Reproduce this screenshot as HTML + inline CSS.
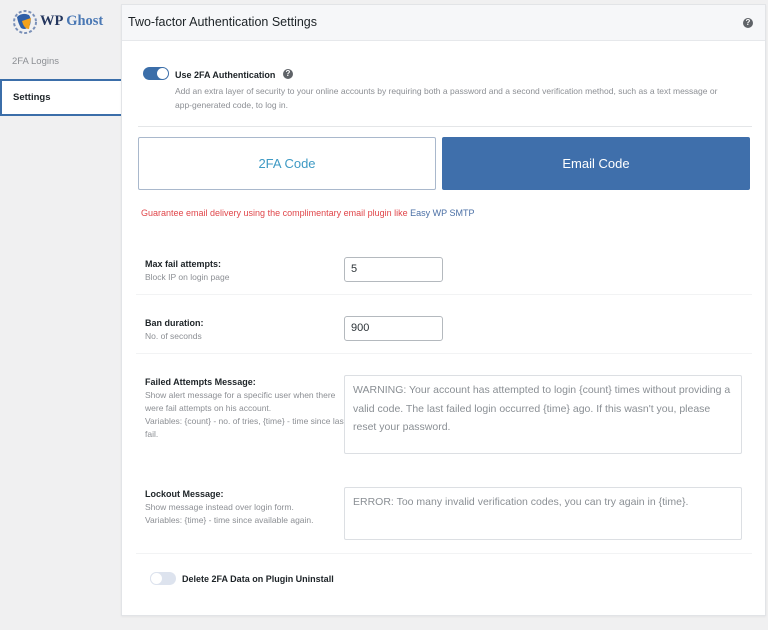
<!DOCTYPE html>
<html><head><meta charset="utf-8"><style>
*{box-sizing:border-box;margin:0;padding:0}
body{width:768px;height:630px;background:#f0f0f1;font-family:"Liberation Sans",sans-serif;position:relative;overflow:hidden;color:#1d2327}
.a{position:absolute}
.panel{left:121px;top:4px;width:645px;height:612px;background:#fff;border:1px solid #e2e4e7;box-shadow:0 1px 2px rgba(0,0,0,.05)}
.hdr{left:0;top:0;width:643px;height:36px;background:#f6f7f9;border-bottom:1px solid #e6e8eb}
.lbl{font-size:9px;font-weight:bold;color:#1d2327}
.sub{font-size:8.5px;color:#8c8f94;line-height:13px;white-space:nowrap}
.inp{border:1px solid #b4b9be;border-radius:3px;background:#fff;font-size:11px;color:#2c3338;padding:0 6px}
.ta{border:1px solid #dcdfe3;border-radius:2px;background:#fff;font-size:10.5px;color:#8a8f94;padding:5px 8px;line-height:18.5px}
.sep{height:1px;background:#f2f3f4}
.q{width:10px;height:10px;border-radius:50%;background:#5f6368;color:#fff;font-size:8px;font-weight:bold;text-align:center;line-height:10px}
</style></head><body>
<svg class="a" style="left:12px;top:9px" width="26" height="26" viewBox="0 0 26 26"><circle cx="13" cy="13" r="11" fill="none" stroke="#7a90b8" stroke-width="2" stroke-dasharray="3 2"/><path d="M5 8 Q10 3 17 6 Q20 10 18 16 Q14 22 9 19 Q6 14 5 8Z" fill="#2f5fa8"/><path d="M10 12 L19 9 L17 20 Q12 20 10 12Z" fill="#f4a21c"/></svg>
<div class="a" style="left:40px;top:13px;font-family:'Liberation Serif',serif;font-weight:bold;font-size:14.5px"><span style="color:#24365e">WP</span> <span style="color:#4a78b4">Ghost</span></div>
<div class="a" style="left:12px;top:56px;font-size:9.5px;color:#8c8f94">2FA Logins</div>
<div class="a" style="left:0;top:79px;width:122px;height:37px;background:#fff;border:2px solid #3b6ea9;border-right:none"></div>
<div class="a" style="left:13px;top:92px;font-size:9.5px;font-weight:bold;color:#1d2327">Settings</div>

<div class="a panel">
 <div class="a hdr"></div>
 <div class="a" style="left:6px;top:10px;font-size:12.5px;color:#1d2327">Two-factor Authentication Settings</div>
 <div class="a q" style="left:621px;top:13px">?</div>

 <div class="a" style="left:21px;top:62px;width:26px;height:13px;border-radius:7px;background:#3b6ea9"></div>
 <div class="a" style="left:35px;top:63px;width:11px;height:11px;border-radius:50%;background:#fff"></div>
 <div class="a lbl" style="left:53px;top:65px">Use 2FA Authentication</div>
 <div class="a q" style="left:161px;top:64px">?</div>
 <div class="a sub" style="left:53px;top:79px;line-height:14px">Add an extra layer of security to your online accounts by requiring both a password and a second verification method, such as a text message or<br>app-generated code, to log in.</div>
 <div class="a sep" style="left:16px;top:121px;width:614px;background:#e4e6e8"></div>

 <div class="a" style="left:16px;top:132px;width:298px;height:53px;border:1px solid #a9b8cc;border-radius:2px;text-align:center;line-height:51px;font-size:13px;color:#3f9ac4">2FA Code</div>
 <div class="a" style="left:320px;top:132px;width:308px;height:53px;background:#3f6fab;border-radius:2px;text-align:center;line-height:53px;font-size:13px;color:#fff">Email Code</div>
 <div class="a" style="left:19px;top:203px;font-size:9px;color:#e0464a">Guarantee email delivery using the complimentary email plugin like <span style="color:#4a6fa5">Easy WP SMTP</span></div>

 <div class="a lbl" style="left:23px;top:254px">Max fail attempts:</div>
 <div class="a sub" style="left:23px;top:266px">Block IP on login page</div>
 <div class="a inp" style="left:222px;top:252px;width:99px;height:25px;line-height:23px">5</div>
 <div class="a sep" style="left:14px;top:289px;width:616px"></div>

 <div class="a lbl" style="left:23px;top:313px">Ban duration:</div>
 <div class="a sub" style="left:23px;top:325px">No. of seconds</div>
 <div class="a inp" style="left:222px;top:311px;width:99px;height:25px;line-height:23px">900</div>
 <div class="a sep" style="left:14px;top:348px;width:616px"></div>

 <div class="a lbl" style="left:23px;top:372px">Failed Attempts Message:</div>
 <div class="a sub" style="left:23px;top:384px">Show alert message for a specific user when there<br>were fail attempts on his account.<br>Variables: {count} - no. of tries, {time} - time since last<br>fail.</div>
 <div class="a ta" style="left:222px;top:370px;width:398px;height:79px">WARNING: Your account has attempted to login {count} times without providing a valid code. The last failed login occurred {time} ago. If this wasn't you, please reset your password.</div>

 <div class="a lbl" style="left:23px;top:484px">Lockout Message:</div>
 <div class="a sub" style="left:23px;top:496px">Show message instead over login form.<br>Variables: {time} - time since available again.</div>
 <div class="a ta" style="left:222px;top:482px;width:398px;height:53px">ERROR: Too many invalid verification codes, you can try again in {time}.</div>
 <div class="a sep" style="left:14px;top:548px;width:616px"></div>

 <div class="a" style="left:28px;top:567px;width:26px;height:13px;border-radius:7px;background:#dde3ee"></div>
 <div class="a" style="left:28px;top:567px;width:13px;height:13px;border-radius:50%;background:#fff;border:1px solid #dde3ee"></div>
 <div class="a lbl" style="left:60px;top:569px">Delete 2FA Data on Plugin Uninstall</div>
</div>
</body></html>
